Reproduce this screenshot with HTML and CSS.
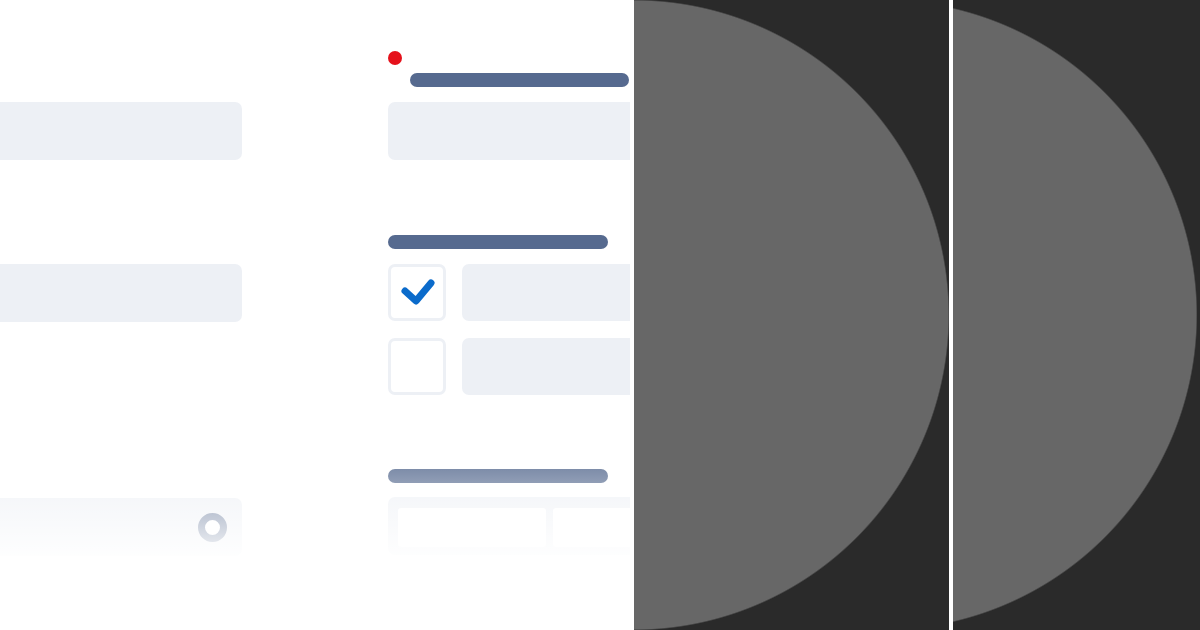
FILE: index.html
```html
<!DOCTYPE html>
<html lang="en">
<head>
<meta charset="utf-8">
<title>Form illustration</title>
<link rel="stylesheet" href="styles.css">
</head>
<body>
<div class="page">
  <div class="form-area">
    <div class="col col-left">
      <div class="field field-1"></div>
      <div class="field field-2"></div>
      <div class="field field-3">
        <span class="ring"></span>
      </div>
    </div>
    <div class="col col-mid">
      <div class="req-label">
        <span class="req-dot"></span>
        <div class="bar bar-req"></div>
      </div>
      <div class="field field-mid"></div>

      <div class="bar bar-section"></div>
      <div class="check-list">
        <div class="check-row">
          <div class="check-box">
            <svg class="check-icon" viewBox="0 0 51 51" width="51" height="51">
              <path d="M13 24 L24 34 L39 16" fill="none" stroke="#0b6bcb" stroke-width="7" stroke-linecap="round" stroke-linejoin="round"/>
            </svg>
          </div>
          <div class="check-field"></div>
        </div>
        <div class="check-row">
          <div class="check-box"></div>
          <div class="check-field"></div>
        </div>
      </div>

      <div class="bar bar-section bar-last"></div>
      <div class="segmented">
        <div class="seg-cell"></div>
        <div class="seg-cell"></div>
      </div>
    </div>
    <div class="fade"></div>
  </div>
  <div class="panel panel-a"></div>
  <div class="panel panel-b"></div>
</div>
</body>
</html>
```

FILE: styles.css
```css
* {
  box-sizing: border-box;
}

html, body {
  margin: 0;
  padding: 0;
  background: #ffffff;
  font-family: "Liberation Sans", Arial, sans-serif;
}

.page {
  width: 1200px;
  height: 630px;
  display: flex;
  gap: 4px;
  overflow: hidden;
  background: #ffffff;
}

/* ---------- form illustration ---------- */
.form-area {
  position: relative;
  width: 630px;
  height: 630px;
  flex: 0 0 630px;
  overflow: hidden;
  display: flex;
  gap: 146px;
}

.col {
  display: flex;
  flex-direction: column;
  flex: 0 0 auto;
}

.col-left {
  width: 242px;
  padding-top: 102px;
}

.field {
  height: 58px;
  background: #edf0f5;
  border-radius: 0 7px 7px 0;
}

.field-2 {
  margin-top: 104px;
}

.field-3 {
  margin-top: 176px;
  display: flex;
  align-items: center;
  justify-content: flex-end;
  padding-right: 15px;
}

.ring {
  width: 29px;
  height: 29px;
  border-radius: 50%;
  border: 7px solid #5f7295;
  background: #ffffff;
}

.col-mid {
  width: 300px;
  padding-top: 51px;
}

.req-label {
  display: flex;
  flex-direction: column;
}

.req-dot {
  width: 14px;
  height: 14px;
  border-radius: 50%;
  background: #e5111b;
}

.bar {
  height: 14px;
  border-radius: 7px;
  background: #566a8f;
}

.bar-req {
  margin-top: 8px;
  margin-left: 22px;
  width: 219px;
}

.field-mid {
  margin-top: 15px;
  border-radius: 7px;
}

.bar-section {
  margin-top: 75px;
  width: 220px;
}

.check-list {
  margin-top: 15px;
  display: flex;
  flex-direction: column;
  gap: 17px;
}

.check-row {
  display: flex;
  gap: 16px;
  height: 57px;
}

.check-box {
  width: 58px;
  height: 57px;
  flex: 0 0 58px;
  border: 3px solid #edf0f5;
  border-radius: 7px;
  background: #ffffff;
  display: flex;
  align-items: center;
  justify-content: center;
}

.check-icon {
  display: block;
}

.check-field {
  flex: 1;
  background: #edf0f5;
  border-radius: 7px;
}

.bar-last {
  margin-top: 74px;
}

.segmented {
  margin-top: 14px;
  height: 58px;
  background: #edf0f5;
  border-radius: 7px;
  padding: 11px 10px 8px;
  display: flex;
  gap: 7px;
}

.seg-cell {
  width: 148px;
  flex: 0 0 148px;
  background: #ffffff;
  border-radius: 3px;
}

.fade {
  position: absolute;
  left: 0;
  top: 0;
  width: 100%;
  height: 100%;
  pointer-events: none;
  background: linear-gradient(to bottom,
    rgba(255, 255, 255, 0) 0px,
    rgba(255, 255, 255, 0) 440px,
    rgba(255, 255, 255, 0.97) 560px,
    #ffffff 575px);
}

/* ---------- dark panels ---------- */
.panel {
  height: 630px;
  background-color: #2a2a2a;
}

.panel-a {
  flex: 0 0 315px;
  background-image: radial-gradient(circle 315px at 0 315px, #676767 314px, #2a2a2a 315.5px);
}

.panel-b {
  flex: 1 1 auto;
  background-image: radial-gradient(circle 315px at -71px 315px, #676767 314px, #2a2a2a 315.5px);
}
```
